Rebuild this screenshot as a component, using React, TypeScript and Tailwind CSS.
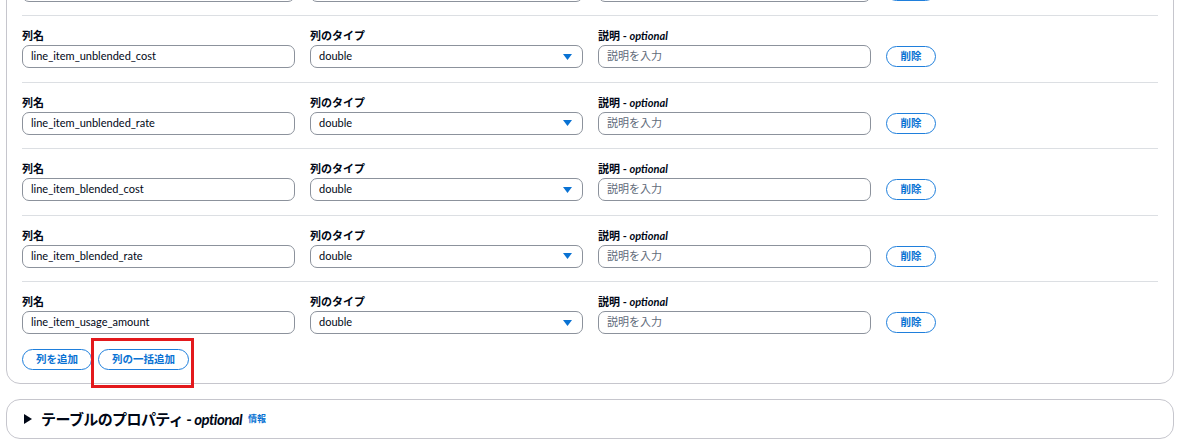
import React from 'react';

const columns = [
  '',
  'line_item_unblended_cost',
  'line_item_unblended_rate',
  'line_item_blended_cost',
  'line_item_blended_rate',
  'line_item_usage_amount',
];

const font = { fontFamily: 'Lato, "Noto Sans CJK JP", sans-serif' };

// stub = the row cut off by the top edge: only the bottoms of its boxes show
const ColumnRow: React.FC<{ name: string; last: boolean; stub: boolean }> = ({ name, last, stub }) => (
  <div className={`pt-[13px] ${last ? '' : 'pb-[13.5px] border-b border-[#dcdfe3]'}`}>
    <div className="flex items-end gap-[15px]">
      <div className="w-[273px]">
        <div className="h-[16px] text-[11px] leading-[13px] pb-[3px] font-bold text-[#000716]">{stub ? '' : '列名'}</div>
        <div className="h-[23px] rounded-[7px] border border-[#8c929c] px-[8px] flex items-center text-[11px] text-[#000716]">
          {name}
        </div>
      </div>
      <div className="w-[273px]">
        <div className="h-[16px] text-[11px] leading-[13px] pb-[3px] font-bold text-[#000716]">{stub ? '' : '列のタイプ'}</div>
        <div className="h-[23px] rounded-[7px] border border-[#8c929c] pl-[8px] pr-[10px] flex items-center justify-between text-[11px] text-[#000716]">
          <span>{stub ? '' : 'double'}</span>
          <svg width="9" height="6" viewBox="0 0 9 6">
            <path d="M0 0 H9 L4.5 6 Z" fill="#0972d3" />
          </svg>
        </div>
      </div>
      <div className="w-[273px]">
        <div className="h-[16px] text-[11px] leading-[13px] pb-[3px] font-bold text-[#000716]">
          {stub ? '' : <>説明 - <i>optional</i></>}
        </div>
        <div className="h-[23px] rounded-[7px] border border-[#8c929c] px-[8px] flex items-center text-[11px] text-[#5f6b7a]">
          {stub ? '' : '説明を入力'}
        </div>
      </div>
      <button className="h-[21px] w-[50px] mb-[1px] rounded-full border border-[#1f7fdc] text-[10.5px] font-bold text-[#0972d3] leading-none">
        {stub ? '' : '削除'}
      </button>
    </div>
  </div>
);

export default function App() {
  return (
    <div className="w-[1200px] h-[444px] overflow-hidden bg-white" style={font}>
      <div className="mt-[-51.5px] mx-[6px] w-[1168px] rounded-[14px] border border-[#c6c6cd] px-[15px] pb-[13px]">
        {columns.map((c, i) => (
          <ColumnRow key={i} name={c} stub={i === 0} last={i === columns.length - 1} />
        ))}
        <div className="mt-[15px] flex gap-[6px]">
          <button className="h-[21px] rounded-full border border-[#1f7fdc] px-[13px] text-[10.5px] font-bold text-[#0972d3] leading-none">
            列を追加
          </button>
          <span className="relative flex">
            <button className="h-[21px] rounded-full border border-[#1f7fdc] px-[13px] text-[10.5px] font-bold text-[#0972d3] leading-none">
              列の一括追加
            </button>
            <span className="absolute -left-[7px] -top-[11px] w-[103px] h-[50px] border-[3px] border-[#e3191c] pointer-events-none" />
          </span>
        </div>
      </div>
      <div className="mt-[15px] mx-[6px] w-[1168px] h-[40px] rounded-[14px] border border-[#c6c6cd] pl-[17px] flex items-center">
        <svg width="8" height="10" viewBox="0 0 8 10" className="mr-[9px]">
          <path d="M0 0 L8 5 L0 10 Z" fill="#000716" />
        </svg>
        <span className="text-[15px] font-bold text-[#000716] tracking-[-0.6px]">
          テーブルのプロパティ - <i>optional</i>
        </span>
        <span className="ml-[6px] text-[9px] font-bold text-[#0972d3]">情報</span>
      </div>
    </div>
  );
}
